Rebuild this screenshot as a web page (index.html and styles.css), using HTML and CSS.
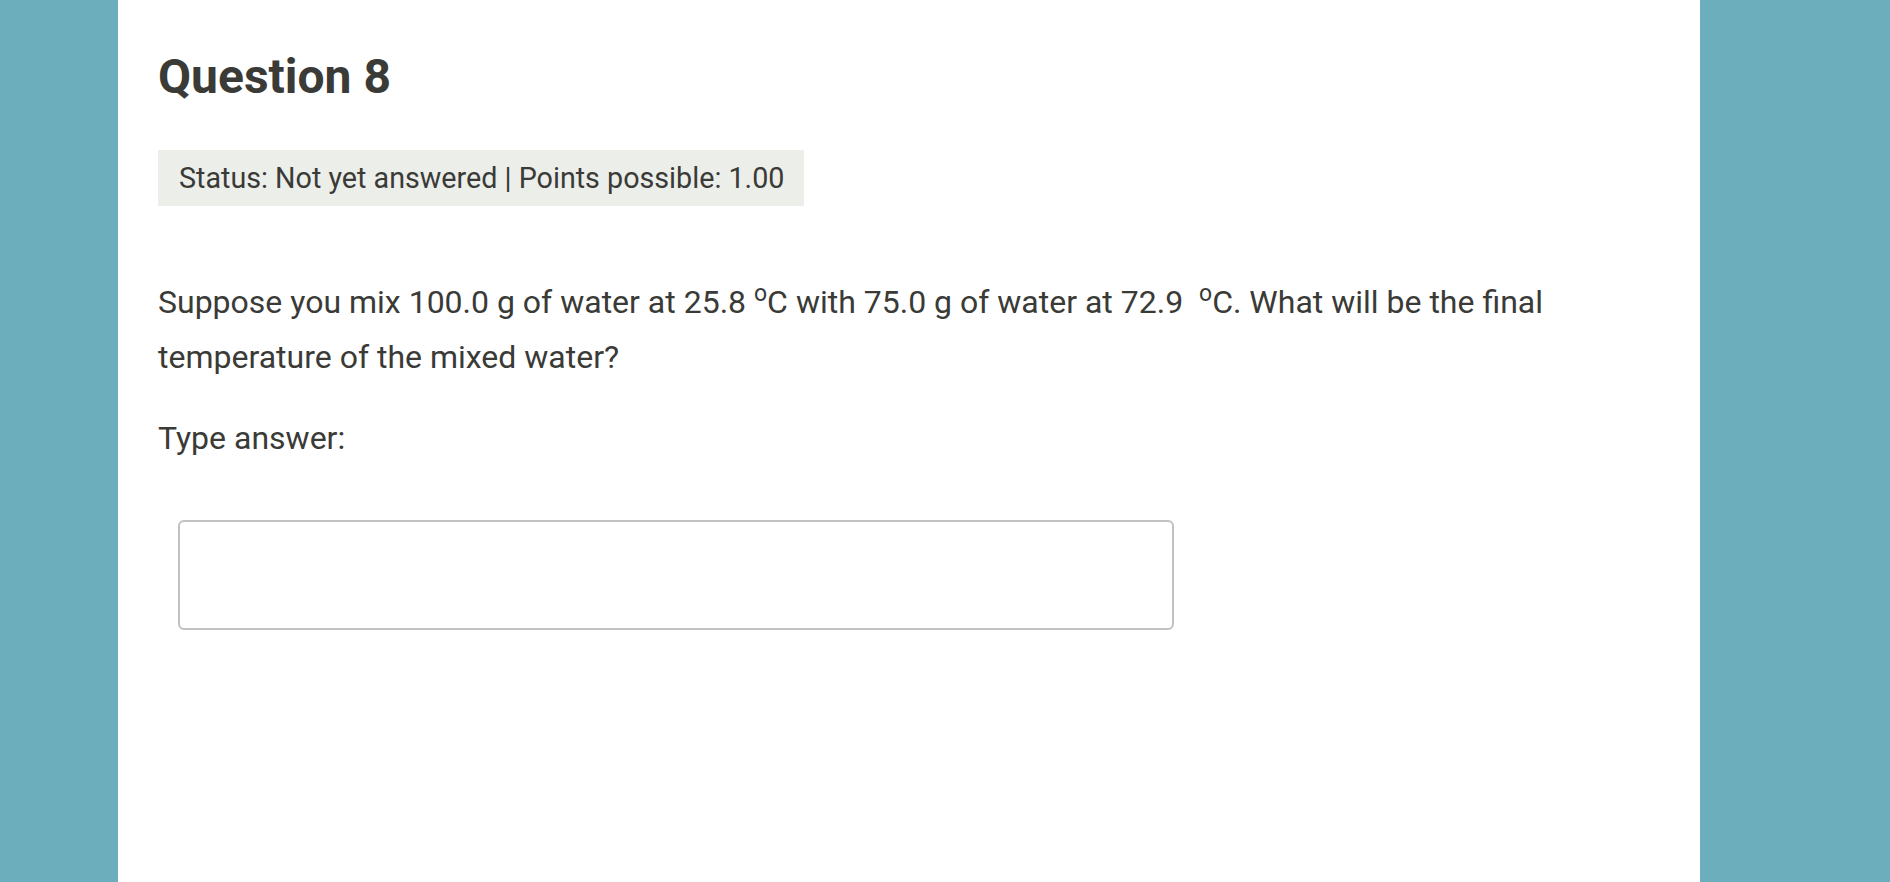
FILE: index.html
```
<!DOCTYPE html>
<html lang="en">
<head>
  <meta charset="UTF-8">
  <title>Question 8</title>
  <link rel="stylesheet" href="styles.css">
</head>
<body>
<div class="page">
  <div class="question">
    <h1>Question 8</h1>
    <div class="status">Status: Not yet answered | Points possible: 1.00</div>

    <p class="prompt">Suppose you mix 100.0 g of water at 25.8 <sup>o</sup>C with 75.0 g of water at 72.9 &nbsp;<sup>o</sup>C. What will be the final temperature of the mixed water?</p>

    <label class="answerLabel" for="answer">Type answer:</label>
    <div class="answerRow">
      <input type="text" id="answer" class="answerInput">
    </div>
  </div>
</div>
</body>
</html>
```

FILE: styles.css
```
html, body {
  margin: 0;
  height: 100%;
}

body {
  background: #6daebc;
  font-family: Roboto, "Liberation Sans", sans-serif;
  color: #3a3a37;
}

.page {
  margin: 0 190px 0 118px;
  background: #fff;
  min-height: 100%;
}

.question {
  padding: 49px 40px 40px;
}

h1 {
  font-size: 48px;
  font-weight: 700;
  margin: 0 0 45px;
  line-height: 56px;
}

.status {
  display: inline-block;
  background: #eceee9;
  font-size: 28.7px;
  line-height: 56px;
  padding: 0 20px 0 21px;
}

.prompt {
  font-size: 32px;
  line-height: 55px;
  margin: 69px 0 0;
  max-width: 1420px;
}

.prompt sup {
  font-size: 23px;
  line-height: 0;
}

.answerLabel {
  display: block;
  font-size: 32px;
  line-height: 55px;
  margin-top: 26px;
}

.answerRow {
  padding: 54px 20px 0;
}

.answerInput {
  width: 996px;
  height: 110px;
  box-sizing: border-box;
  border: 2px solid #c1c1c1;
  border-radius: 6px;
  font-size: 30px;
  font-family: inherit;
  padding: 0 16px;
  outline: none;
}
```
